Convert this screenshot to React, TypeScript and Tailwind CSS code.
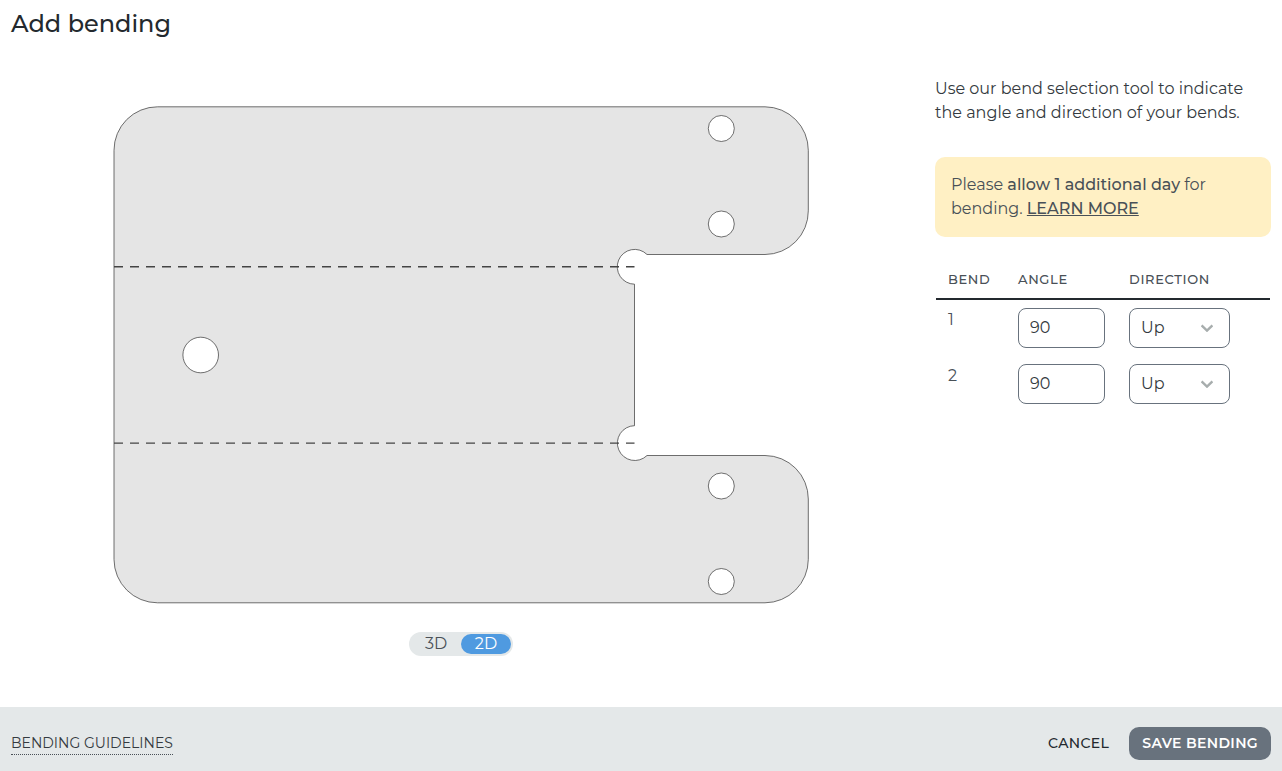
import { useState } from "react";
import { clsx } from "clsx";

type Bend = { id: number, angle: string, direction: string }

const holes = [
    { cx: 710.3, cy: 51.5, r: 13 },
    { cx: 710.3, cy: 147, r: 13 },
    { cx: 710.3, cy: 409, r: 13 },
    { cx: 710.3, cy: 504.5, r: 13 },
    { cx: 189.7, cy: 278, r: 17.8 },
]

const outline = `M146.5 29.8 H754 A43.5 43.5 0 0 1 797.3 73.3 V133.8 A43.5 43.5 0 0 1 754 177.5
    H636 A17.4 17.4 0 1 0 623.5 207.2 V348.7 A17.4 17.4 0 1 0 636 378.5
    H754 A43.5 43.5 0 0 1 797.3 422 V482.5 A43.5 43.5 0 0 1 754 525.8
    H146.5 A43.5 43.5 0 0 1 103 482.5 V73.3 A43.5 43.5 0 0 1 146.5 29.8 Z`

function FlatPart() {
    return (
        <svg className="block w-full" viewBox="0 0 900 555" role="img" aria-label="Flat part">
            <g stroke="#333" strokeWidth="0.7">
                <path d={outline} fill="#e5e5e5" />
                {holes.map(hole => <circle key={`${hole.cx}-${hole.cy}`} {...hole} fill="#fff" />)}
            </g>
            <g stroke="#444" strokeWidth="1.4" strokeDasharray="9 7">
                <path d="M103 189.8 H623.5" />
                <path d="M103 366.1 H623.5" />
            </g>
        </svg>
    );
}

function ViewToggle() {
    const [view, setView] = useState('2D')

    return (
        <div className="flex rounded-full bg-[#e4e8e9] p-0.5">
            {['3D', '2D'].map(name => (
                <button
                    key={name}
                    type="button"
                    aria-pressed={view === name}
                    className={clsx('h-5 w-[50px] rounded-full text-base leading-5', view === name ? 'bg-[#4f9ae0] text-white' : 'text-[#495057]')}
                    onClick={() => setView(name)}
                >
                    {name}
                </button>
            ))}
        </div>
    );
}

function BendRow({ bend, onChange }: { bend: Bend, onChange: (bend: Bend) => void }) {
    return (
        <tr className="align-top">
            <td className="px-3 py-2 text-[#495057]">{bend.id}</td>
            <td className="px-3 py-2">
                <input
                    className="block h-10 w-full rounded-lg border border-[#68727d] bg-white px-[11px] pb-0.5"
                    aria-label={`Angle of bend ${bend.id}`}
                    value={bend.angle}
                    onChange={e => onChange({ ...bend, angle: e.target.value })}
                />
            </td>
            <td className="px-3 py-2">
                <div className="relative w-[101px]">
                    <select
                        className="block h-10 w-full appearance-none rounded-lg border border-[#68727d] bg-white px-[11px]"
                        aria-label={`Direction of bend ${bend.id}`}
                        value={bend.direction}
                        onChange={e => onChange({ ...bend, direction: e.target.value })}
                    >
                        <option>Up</option>
                        <option>Down</option>
                    </select>
                    <svg className="pointer-events-none absolute top-4 right-[17px] h-2 w-3" viewBox="0 0 12 8" fill="none" stroke="#a7adad" strokeWidth="2.4">
                        <path d="M0.6 1.4 L6 6.6 L11.4 1.4" />
                    </svg>
                </div>
            </td>
        </tr>
    );
}

export default function App() {
    const [bends, setBends] = useState<Bend[]>([
        { id: 1, angle: '90', direction: 'Up' },
        { id: 2, angle: '90', direction: 'Up' },
    ])

    const updateBend = (next: Bend) => setBends(bends.map(bend => bend.id === next.id ? next : bend))

    return (
        <div className="flex min-h-screen flex-col bg-white font-['Montserrat','Inter',sans-serif] text-base font-normal text-[#343a40]">
            <header className="px-[11px] pt-2">
                <h1 className="text-2xl leading-8 font-medium text-[#23292e]">Add bending</h1>
            </header>

            <main className="flex grow gap-6 px-[11px] pt-[37px]">
                <section className="flex min-w-0 grow flex-col items-center">
                    <FlatPart />
                    <ViewToggle />
                </section>

                <aside className="w-[336px] shrink-0">
                    <p>Use our bend selection tool to indicate the angle and direction of your bends.</p>

                    <div className="mt-8 rounded-[10px] bg-[#fff0c4] p-4 text-[#495057]">
                        Please <strong className="font-medium">allow 1 additional day</strong> for bending. <a className="font-medium underline" href="#lead-time">LEARN MORE</a>
                    </div>

                    <div className="mt-6 px-px">
                        <table className="w-full table-fixed border-collapse">
                            <thead>
                                <tr className="border-b-2 border-[#23292e] text-left text-[13px] leading-5 tracking-wider text-[#495057]">
                                    <th className="w-[70px] px-3 pt-2 pb-[9px] font-medium">BEND</th>
                                    <th className="w-[111px] px-3 pt-2 pb-[9px] font-medium">ANGLE</th>
                                    <th className="px-3 pt-2 pb-[9px] font-medium">DIRECTION</th>
                                </tr>
                            </thead>
                            <tbody>
                                {bends.map(bend => <BendRow key={bend.id} bend={bend} onChange={updateBend} />)}
                            </tbody>
                        </table>
                    </div>
                </aside>
            </main>

            <footer className="flex h-16 items-center bg-[#e4e8e9] px-[11px] pt-2">
                <a className="border-b border-dotted border-[#495057] text-sm leading-[22px] text-[#343a40]" href="#guidelines">BENDING GUIDELINES</a>
                <button type="button" className="ml-auto px-5 text-sm font-medium tracking-wide text-[#23292e]">CANCEL</button>
                <button type="button" className="h-[33px] rounded-[10px] bg-[#68727d] px-[13px] text-sm font-semibold tracking-wide text-white">SAVE BENDING</button>
            </footer>
        </div>
    );
}
